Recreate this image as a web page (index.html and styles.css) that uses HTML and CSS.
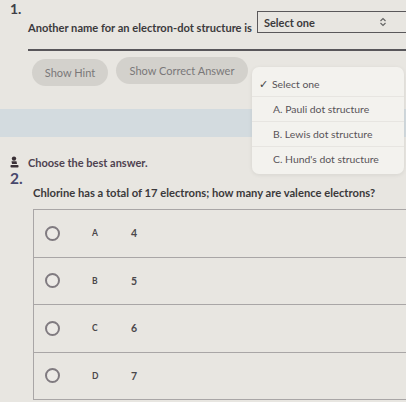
FILE: index.html
```html
<!DOCTYPE html>
<html>
<head>
<meta charset="utf-8">
<link rel="stylesheet" href="styles.css">
</head>
<body>
<div class="page">
  <section class="q1">
    <div class="num">1.</div>
    <div class="prompt-row">
      <span class="prompt">Another name for an electron-dot structure is</span>
      <div class="select">
        <span>Select one</span>
        <svg class="updown" width="8" height="10" viewBox="0 0 8 10"><path d="M1.5 4 L4 1.5 L6.5 4 M1.5 6 L4 8.5 L6.5 6" fill="none" stroke="#666" stroke-width="1.2"/></svg>
      </div>
    </div>
    <div class="rule"></div>
    <div class="buttons">
      <button class="pill hint">Show Hint</button>
      <button class="pill answer">Show Correct Answer</button>
    </div>
  </section>
  <div class="band"></div>
  <section class="q2">
    <div class="instruction">
      <svg width="9" height="12" viewBox="0 0 9 12"><circle cx="4" cy="2.6" r="2.2" fill="#3a3036"/><path d="M1.5 5.2 H6.5 L7 8 H2 Z" fill="#3a3036"/><rect x="0.5" y="9" width="8" height="2.6" rx="0.8" fill="#3a3036"/></svg>
      <span>Choose the best answer.</span>
    </div>
    <div class="num num2">2.</div>
    <div class="stem">Chlorine has a total of 17 electrons; how many are valence electrons?</div>
    <div class="choices">
      <div class="choice"><span class="radio"></span><span class="letter">A</span><span class="val">4</span></div>
      <div class="choice"><span class="radio"></span><span class="letter">B</span><span class="val">5</span></div>
      <div class="choice"><span class="radio"></span><span class="letter">C</span><span class="val">6</span></div>
      <div class="choice"><span class="radio"></span><span class="letter">D</span><span class="val">7</span></div>
    </div>
  </section>
  <div class="menu">
    <div class="opt selected"><span class="check">✓</span>Select one</div>
    <div class="opt">A. Pauli dot structure</div>
    <div class="opt">B. Lewis dot structure</div>
    <div class="opt">C. Hund's dot structure</div>
  </div>
</div>
</body>
</html>
```
FILE: styles.css
```css
* { box-sizing: border-box; }
html, body { margin: 0; padding: 0; }
body {
  background: #e8e6e1;
  font-family: Lato, "Open Sans", sans-serif;
  color: #3b393b;
  width: 406px;
  height: 402px;
  overflow: hidden;
}
.page { position: relative; width: 406px; height: 402px; }

.q1 { padding: 3px 0 0 10px; }
.num {
  font-weight: 700;
  font-size: 14px;
  line-height: 12px;
  color: #3f3f48;
}
.prompt-row {
  display: flex;
  align-items: flex-start;
  margin-top: -4px;
  padding-left: 18px;
}
.prompt {
  font-weight: 700;
  font-size: 11.1px;
  margin-top: 10px;
  color: #3c3a3c;
  white-space: nowrap;
}
.select {
  margin-left: 5px;
  flex: 1;
  height: 22px;
  border: 1.5px solid #5a585a;
  border-right: none;
  display: flex;
  align-items: center;
  padding-left: 6px;
  font-weight: 700;
  font-size: 11px;
  color: #3c3a3c;
}
.updown { margin-left: auto; margin-right: 19px; }
.rule {
  margin: 15px 0 0 18px;
  height: 2px;
  background: #58565a;
}
.buttons {
  display: flex;
  gap: 8px;
  padding-left: 22px;
  margin-top: 7px;
  align-items: flex-start;
}
.pill {
  border: none;
  background: #d3d1cc;
  color: #7a7879;
  font-family: inherit;
  font-size: 11px;
  border-radius: 14px;
  height: 27px;
  padding: 0;
}
.hint { width: 76px; margin-top: 1px; }
.answer { width: 132px; margin-top: -1px; }

.band {
  margin-top: 23px;
  height: 28px;
  background: #d3dbdf;
}

.q2 { padding: 19px 0 0 10px; }
.instruction {
  display: flex;
  align-items: center;
  gap: 9px;
  font-weight: 700;
  font-size: 11px;
  color: #4e4250;
}
.instruction svg { margin-top: -2px; }
.num2 {
  font-size: 15.5px;
  line-height: 14px;
  color: #48486c;
  margin-top: 2px;
}
.stem {
  margin: 1px 0 0 23px;
  font-weight: 700;
  font-size: 11.2px;
  color: #3b393b;
  white-space: nowrap;
}
.choices {
  margin: 10px 0 0 23px;
  border-left: 1.5px solid #a9a6a6;
  border-top: 1.5px solid #a9a6a6;
}
.choice {
  height: 47.5px;
  border-bottom: 1.5px solid #a9a6a6;
  display: flex;
  align-items: center;
  padding-left: 11px;
  font-weight: 700;
  color: #4a474a;
}
.radio {
  width: 15px;
  height: 15px;
  border: 2px solid #807b80;
  border-radius: 50%;
  background: #eceae6;
}
.letter { font-size: 8.5px; margin-left: 32px; width: 39px; }
.val { font-size: 10.5px; }

.menu {
  position: absolute;
  left: 252px;
  top: 67px;
  width: 152px;
  background: #f3f2ee;
  border-radius: 7px;
  box-shadow: 0 1px 4px rgba(0,0,0,0.08);
  padding: 4px 0 3px;
}
.opt {
  height: 25px;
  display: flex;
  align-items: center;
  padding-left: 21px;
  font-size: 10.4px;
  color: #585258;
  border-top: 1px solid #e7e5e1;
}
.opt:first-child { border-top: none; }
.opt.selected { padding-left: 7px; }
.check { width: 13px; font-size: 11px; color: #444; }
```
